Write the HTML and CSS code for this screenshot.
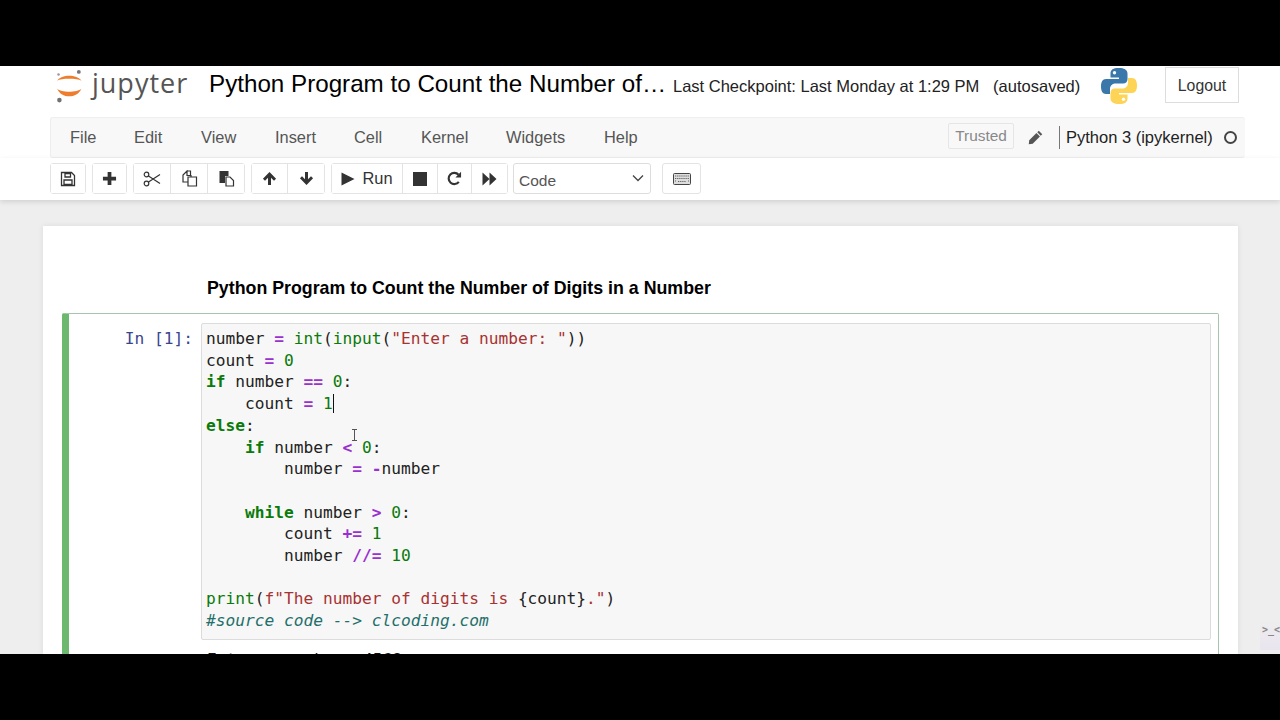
FILE: index.html
```html
<!DOCTYPE html>
<html lang="en">
<head>
<meta charset="utf-8">
<title>Python Program to Count the Number of Digits in a Number</title>
<link rel="stylesheet" href="styles.css">
</head>
<body>
<div class="letterbox"></div>
<main class="screen">
  <header class="header">
    <div class="logo">
      <svg class="logo-mark" viewBox="0 0 34 40" width="30" height="36">
        <path d="M2.500 14C7 6.500 25 6.500 30 14C25 11 7 11 2.500 14Z" fill="#ef7d2e"/>
        <path d="M2.500 23C7 34.500 25 34.500 30 23C25 27.500 7 27.500 2.500 23Z" fill="#ef7d2e"/>
        <circle cx="27" cy="4" r="2.2" fill="#767677"/>
        <circle cx="4" cy="7" r="1.4" fill="#989798"/>
        <circle cx="5" cy="36" r="2.600" fill="#717272"/>
      </svg>
      <span class="logo-text">jupyter</span>
    </div>
    <h1 class="title">Python Program to Count the Number of…</h1>
    <span class="checkpoint">Last Checkpoint: Last Monday at 1:29 PM&nbsp;&nbsp; (autosaved)</span>
    <svg class="py-logo" viewBox="0 0 36 36" width="36" height="36">
      <path d="M17.7 0C12 0 9.5 1.8 9.5 5.5V9.500H18V11H5C1.500 11 0 14 0 18.500C0 23 1.500 26 5 26H9V21C9 17.500 11.500 15.500 15 15.500H22C25 15.500 26.500 13.500 26.500 11V5.500C26.500 1.800 23 0 17.700 0Z" fill="#3a77aa"/>
      <path d="M18.300 36C24 36 26.500 34.200 26.500 30.500V26.500H18V25H31C34.500 25 36 22 36 17.500C36 13 34.500 10 31 10H27V15C27 18.500 24.500 20.500 21 20.500H14C11 20.500 9.500 22.500 9.500 25V30.500C9.500 34.200 13 36 18.300 36Z" fill="#fdd455"/>
      <circle cx="13.500" cy="4.800" r="1.700" fill="#fff"/>
      <circle cx="22.500" cy="31.200" r="1.700" fill="#fff"/>
    </svg>
    <button class="logout">Logout</button>
  </header>

  <nav class="menubar">
    <span class="menu-item m-file">File</span>
    <span class="menu-item m-edit">Edit</span>
    <span class="menu-item m-view">View</span>
    <span class="menu-item m-insert">Insert</span>
    <span class="menu-item m-cell">Cell</span>
    <span class="menu-item m-kernel">Kernel</span>
    <span class="menu-item m-widgets">Widgets</span>
    <span class="menu-item m-help">Help</span>
    <span class="trusted">Trusted</span>
    <svg class="pencil" viewBox="0 0 16 16" width="15" height="15"><path d="M11.500 0.800L15.200 4.500L13.600 6.100L9.900 2.400ZM9 3.300L12.700 7L5 14.700L0.800 15.200L1.300 11Z" fill="#555"/></svg>
    <span class="kernel-name">Python 3 (ipykernel)</span>
    <span class="kernel-dot"></span>
  </nav>

  <div class="toolbar">
    <div class="btn-group">
      <button class="btn w34"><svg viewBox="0 0 16 16" width="16" height="16"><path d="M2 1.500H11.500L14.500 4.500V14.500H1.500V1.500ZM5 2.500V6H10.500V2.500ZM4 9V13.500H12V9Z" fill="none" stroke="#333" stroke-width="1.300"/></svg></button>
    </div>
    <div class="btn-group">
      <button class="btn w33"><svg viewBox="0 0 16 16" width="15" height="15"><path d="M6 1H10V6H15V10H10V15H6V10H1V6H6Z" fill="#333"/></svg></button>
    </div>
    <div class="btn-group">
      <button class="btn w36"><svg viewBox="0 0 18 16" width="18" height="16"><circle cx="3.500" cy="3.500" r="2.300" fill="none" stroke="#333" stroke-width="1.200"/><circle cx="3.500" cy="12.500" r="2.300" fill="none" stroke="#333" stroke-width="1.200"/><path d="M5.500 5L17 12.500M5.500 11L17 3.500" stroke="#333" stroke-width="1.200" fill="none"/></svg></button>
      <button class="btn w37"><svg viewBox="0 0 17 17" width="17" height="17"><path d="M6 1H9.500V5.500H6V1L2 5V12H7M7 7H15.500V16H7ZM10 7V5" fill="none" stroke="#333" stroke-width="1.200"/></svg></button>
      <button class="btn w37"><svg viewBox="0 0 17 17" width="17" height="17"><path d="M1.500 1H10.500V6H7V13H1.500Z" fill="#333"/><path d="M8 7H12L15.500 10.500V16H8Z" fill="#fff" stroke="#333" stroke-width="1.200"/></svg></button>
    </div>
    <div class="btn-group">
      <button class="btn w35"><svg viewBox="0 0 16 16" width="15" height="15"><path d="M8 1L15 8.200L12.800 10.400L9.600 7.100V15H6.400V7.100L3.200 10.400L1 8.200Z" fill="#333"/></svg></button>
      <button class="btn w37"><svg viewBox="0 0 16 16" width="15" height="15"><path d="M8 15L15 7.800L12.800 5.600L9.600 8.900V1H6.400V8.900L3.200 5.600L1 7.800Z" fill="#333"/></svg></button>
    </div>
    <div class="btn-group">
      <button class="btn w70"><svg viewBox="0 0 14 14" width="14" height="14"><path d="M0.500 0.500L13.500 7L0.500 13.500Z" fill="#333"/></svg><span class="run-label">Run</span></button>
      <button class="btn w35"><svg viewBox="0 0 14 14" width="14" height="14"><rect width="14" height="14" fill="#333"/></svg></button>
      <button class="btn w34"><svg viewBox="0 0 16 16" width="15" height="15"><path d="M12.600 11.500A6 6 0 1 1 12.300 4" fill="none" stroke="#333" stroke-width="2.300"/><path d="M15 0.800V6.800H9Z" fill="#333"/></svg></button>
      <button class="btn w36"><svg viewBox="0 0 15 14" width="15" height="14"><path d="M0.500 0.500L7.500 7L0.500 13.500ZM7.500 0.500L14.500 7L7.500 13.500Z" fill="#333"/></svg></button>
    </div>
    <div class="cell-type">
      <span>Code</span>
      <svg viewBox="0 0 12 8" width="12" height="8"><path d="M1 1.500L6 6.500L11 1.500" fill="none" stroke="#444" stroke-width="1.300"/></svg>
    </div>
    <button class="btn kbd"><svg viewBox="0 0 18 12" width="18" height="12"><rect x="0.500" y="0.500" width="17" height="11" rx="1" fill="#ddd" stroke="#444"/><path d="M2 3H16M2 5.500H16M2 8H3M5 8.500H13M15 8H16" stroke="#666" stroke-width="1.200" stroke-dasharray="1.300 .8" fill="none"/></svg></button>
  </div>

  <section class="site">
    <div class="notebook">
      <div class="md-cell">Python Program to Count the Number of Digits in a Number</div>
      <div class="code-cell">
        <div class="input-row">
          <div class="prompt">In [1]:</div>
          <pre class="editor"><span class="nm">number</span> <span class="op">=</span> <span class="bi">int</span>(<span class="bi">input</span>(<span class="st">"Enter a number: "</span>))
count <span class="op">=</span> <span class="nu">0</span>
<span class="kw">if</span> number <span class="op">==</span> <span class="nu">0</span>:
    count <span class="op">=</span> <span class="nu">1</span><span class="caret"></span>
<span class="kw">else</span>:
    <span class="kw">if</span> number <span class="op">&lt;</span> <span class="nu">0</span>:
        number <span class="op">=</span> <span class="op">-</span>number

    <span class="kw">while</span> number <span class="op">&gt;</span> <span class="nu">0</span>:
        count <span class="op">+=</span> <span class="nu">1</span>
        number <span class="op">//=</span> <span class="nu">10</span>

<span class="bi">print</span>(<span class="st">f"The number of digits is </span>{count}<span class="st">."</span>)
<span class="cm">#source code --&gt; clcoding.com</span></pre>
        </div>
        <pre class="output">Enter a number: 4568</pre>
      </div>
    </div>
    <svg class="ibeam" viewBox="0 0 7 12" width="7" height="12"><path d="M1 .5H6M3.500 .5V11.500M1 11.500H6" stroke="#555" fill="none"/></svg>
    <div class="corner-mark">&gt;_&lt;</div>
  </section>
</main>
<div class="letterbox"></div>
</body>
</html>
```

FILE: styles.css
```css
* { box-sizing: border-box; }
html, body { margin: 0; height: 720px; overflow: hidden; background: #000; }
body { display: flex; flex-direction: column; font-family: "Liberation Sans", Arial, sans-serif; color: #333; }
.letterbox { height: 66px; flex: none; background: #000; }
.screen { height: 588px; flex: none; background: #fff; display: flex; flex-direction: column; overflow: hidden; position: relative; }

.header { height: 51px; flex: none; display: flex; align-items: flex-start; padding-left: 55px; }
.logo { display: flex; align-items: flex-start; width: 154px; flex: none; padding-top: 2px; }
.logo-mark { flex: none; }
.logo-text { font-family: "Open Sans", sans-serif; font-size: 27px; line-height: 32px; margin-top: -1px; color: #555; letter-spacing: 1px; margin-left: 7px; }
.title { margin: 0; font-size: 24.200px; font-weight: 400; line-height: 36px; color: #000; white-space: nowrap; width: 464px; flex: none; }
.checkpoint { font-size: 16.500px; line-height: 40px; color: #222; white-space: nowrap; width: 428px; flex: none; }
.py-logo { margin-top: 2px; flex: none; }
.logout { margin: 1px 0 0 28px; width: 74px; height: 36px; background: #fff; border: 1px solid #ddd; font: 15.800px "Liberation Sans", sans-serif; color: #333; padding: 1px 0 0; }

.menubar { height: 41px; flex: none; margin: 0 35px 0 50px; background: #f8f8f8; border: 1px solid #eee; border-width: 1px 0 1px 1px; border-radius: 3px; display: flex; align-items: center; font-size: 16.400px; color: #555; position: relative; }
.menu-item { flex: none; }
.m-file { margin-left: 19px; width: 64px; }
.m-edit { width: 67px; }
.m-view { width: 74px; }
.m-insert { width: 79px; }
.m-cell { width: 67px; }
.m-kernel { width: 85px; }
.m-widgets { width: 98px; }
.m-help { width: 344px; }
.trusted { width: 66px; height: 26px; flex: none; border: 1px solid #e6e6e6; background: #f8f8f8; color: #888; display: flex; align-items: center; justify-content: center; font-size: 15.400px; border-radius: 2px; margin-bottom: 3px; }
.pencil { margin-left: 14px; flex: none; }
.kernel-name { margin-left: 16px; padding-left: 6px; border-left: 1px solid #777; line-height: 23px; color: #222; font-size: 16.500px; white-space: nowrap; width: 165px; flex: none; }
.kernel-dot { width: 13px; height: 13px; border: 2px solid #444; border-radius: 50%; flex: none; }

.toolbar { height: 42px; flex: none; padding: 5px 0 0 50px; display: flex; align-items: flex-start; gap: 6px; box-shadow: 0 2px 5px rgba(0,0,0,.12); position: relative; z-index: 1; background: #fff; }
.btn-group { display: flex; height: 31px; border: 1px solid #e3e3e3; border-radius: 3px; background: #fff; flex: none; }
.btn { height: 100%; background: #fff; border: 0; border-left: 1px solid #e3e3e3; padding: 0; display: flex; align-items: center; justify-content: center; flex: none; }
.btn:first-child { border-left: 0; }
.w33 { width: 33px; }
.w34 { width: 34px; }
.w35 { width: 35px; }
.w36 { width: 36px; }
.w37 { width: 37px; }
.w70 { width: 70px; }
.run-label { font-size: 16.400px; color: #333; margin-left: 7px; }
.cell-type { width: 138px; height: 31px; flex: none; margin-left: -1px; border: 1px solid #ddd; border-radius: 3px; display: flex; align-items: center; justify-content: space-between; padding: 5px 6px 0 5px; font-size: 15.500px; color: #555; }
.cell-type svg { margin-top: -6px; }
.kbd { width: 39px; height: 31px; flex: none; margin-left: 5px; border: 1px solid #e3e3e3; border-radius: 3px; }
.btn.kbd:first-child { border-left: 1px solid #e3e3e3; }

.site { flex: 1; min-height: 0; background: #eee; padding: 26px 42px 0 43px; position: relative; overflow: hidden; }
.notebook { background: #fff; height: 100%; padding: 0 19px; position: relative; box-shadow: 0 0 6px rgba(0,0,0,.08); }
.md-cell { height: 87px; padding: 52px 0 0 145px; font-size: 17.800px; line-height: 20px; font-weight: 700; color: #000; white-space: nowrap; }
.code-cell { border: 1px solid #a9c4ae; border-left: 7px solid #6cb86f; border-radius: 2px; padding: 9px 7px 0 0; height: 400px; }
.input-row { display: flex; }
.prompt { width: 132px; flex: none; text-align: right; padding: 5px 8px 0 0; font: 16.200px/21.700px "DejaVu Sans Mono", monospace; color: #3a4590; }
.editor { flex: 1; margin: 0; height: 317px; background: #f7f7f7; border: 1px solid #dcdcdc; border-radius: 2px; padding: 4px 0 0 4px; font: 16.200px/21.700px "DejaVu Sans Mono", monospace; color: #222; }
.op { color: #9a30d0; font-weight: 700; }
.bi { color: #0a7a0a; }
.nm { color: #222; }
.st { color: #a83232; }
.nu { color: #0a7a0a; }
.kw { color: #0a7a0a; font-weight: 700; }
.cm { color: #1f6f6a; font-style: italic; }
.caret { display: inline-block; width: 0; height: 19px; border-left: 1.500px solid #111; vertical-align: -4px; }
.output { margin: 9px 0 0 138px; font: 16.200px/21.700px "DejaVu Sans Mono", monospace; color: #111; }
.ibeam { position: absolute; left: 351px; top: 229px; }
.corner-mark { position: absolute; right: 0; top: 420px; width: 20px; height: 30px; background: linear-gradient(#eee, #e9e4ef); color: #888; font: 700 10px/20px "DejaVu Sans Mono", monospace; white-space: nowrap; overflow: hidden; padding-left: 2px; }
```
